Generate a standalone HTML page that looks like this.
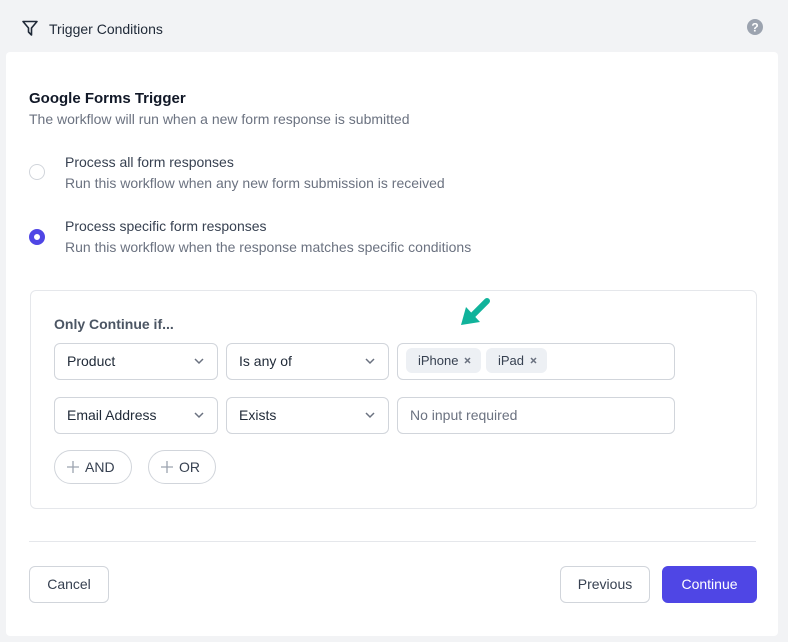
<!DOCTYPE html>
<html><head><style>
*{box-sizing:border-box;margin:0;padding:0}
body{width:788px;height:642px;background:#f2f3f5;font-family:"Liberation Sans",sans-serif;position:relative;overflow:hidden;color:#1f2937}
.a{position:absolute}
.panel{left:6px;top:52px;width:772px;height:584px;background:#fff;border-radius:4px}
.t{font-size:14px;white-space:nowrap}
.g{color:#6b7280}
.sel{position:absolute;height:37px;border:1px solid #d1d5db;border-radius:6px;background:#fff;font-size:14px;color:#1f2937;padding-left:12px;line-height:35px}
.sel svg{position:absolute;right:12px;top:13px}
.btn{position:absolute;border:1px solid #d1d5db;border-radius:6px;background:#fff;font-size:14px;color:#374151;text-align:center;line-height:35px;height:37px}
.pill{position:absolute;height:34px;border:1px solid #d1d5db;border-radius:17px;font-size:14px;color:#374151;line-height:32px;padding-left:30px}
.pill svg{position:absolute;left:12px;top:10px}
.chip{position:absolute;top:348px;height:25px;background:#edf0f4;border-radius:6px;font-size:13px;color:#374151;line-height:25px;padding-left:12px}
.chip svg{position:absolute;right:10px;top:9px}
</style></head><body>
<svg class="a" style="left:21px;top:19px" width="18" height="18" viewBox="0 0 18 18"><path d="M2 2.5h14l-5.5 6.5v7l-3-3v-4z" fill="none" stroke="#1f2937" stroke-width="1.6" stroke-linejoin="round"/></svg>
<div class="a t" style="left:49px;top:21px;color:#1f2937">Trigger Conditions</div>
<svg class="a" style="left:747px;top:19px" width="16" height="16" viewBox="0 0 16 16"><circle cx="8" cy="8" r="8" fill="#9ca3af"/><text x="8" y="12.5" font-size="12" font-weight="bold" text-anchor="middle" fill="#fff" font-family="Liberation Sans">?</text></svg>
<div class="a panel"></div>
<div class="a" style="left:29px;top:90px;font-size:15px;font-weight:bold;color:#111827">Google Forms Trigger</div>
<div class="a t g" style="left:29px;top:111px">The workflow will run when a new form response is submitted</div>
<div class="a" style="left:29px;top:164px;width:16px;height:16px;border:1px solid #d1d5db;border-radius:50%"></div>
<div class="a t" style="left:65px;top:154px;color:#374151">Process all form responses</div>
<div class="a t g" style="left:65px;top:175px">Run this workflow when any new form submission is received</div>
<div class="a" style="left:29px;top:229px;width:16px;height:16px;border:5px solid #4f46e5;border-radius:50%;background:#fff"></div>
<div class="a t" style="left:65px;top:218px;color:#374151">Process specific form responses</div>
<div class="a t g" style="left:65px;top:239px">Run this workflow when the response matches specific conditions</div>
<div class="a" style="left:30px;top:290px;width:727px;height:219px;border:1px solid #e5e7eb;border-radius:6px"></div>
<div class="a t" style="left:54px;top:316px;font-weight:bold;color:#4b5563">Only Continue if...</div>
<div class="sel" style="left:54px;top:343px;width:164px">Product<svg width="12" height="8" viewBox="0 0 12 8"><path d="M2 2l4 4 4-4" fill="none" stroke="#6b7280" stroke-width="1.5"/></svg></div>
<div class="sel" style="left:226px;top:343px;width:163px">Is any of<svg width="12" height="8" viewBox="0 0 12 8"><path d="M2 2l4 4 4-4" fill="none" stroke="#6b7280" stroke-width="1.5"/></svg></div>
<div class="sel" style="left:397px;top:343px;width:278px"></div>
<div class="chip" style="left:406px;width:75px">iPhone<svg width="7" height="7" viewBox="0 0 7 7"><path d="M1 1l5 5M6 1l-5 5" stroke="#6b7280" stroke-width="1.5"/></svg></div>
<div class="chip" style="left:486px;width:61px">iPad<svg width="7" height="7" viewBox="0 0 7 7"><path d="M1 1l5 5M6 1l-5 5" stroke="#6b7280" stroke-width="1.5"/></svg></div>
<div class="sel" style="left:54px;top:397px;width:164px">Email Address<svg width="12" height="8" viewBox="0 0 12 8"><path d="M2 2l4 4 4-4" fill="none" stroke="#6b7280" stroke-width="1.5"/></svg></div>
<div class="sel" style="left:226px;top:397px;width:163px">Exists<svg width="12" height="8" viewBox="0 0 12 8"><path d="M2 2l4 4 4-4" fill="none" stroke="#6b7280" stroke-width="1.5"/></svg></div>
<div class="sel" style="left:397px;top:397px;width:278px;color:#6b7280">No input required</div>
<div class="pill" style="left:54px;top:450px;width:78px"><svg width="12" height="12" viewBox="0 0 12 12"><path d="M6 0v12M0 6h12" stroke="#9ca3af" stroke-width="1.3"/></svg>AND</div>
<div class="pill" style="left:148px;top:450px;width:68px"><svg width="12" height="12" viewBox="0 0 12 12"><path d="M6 0v12M0 6h12" stroke="#9ca3af" stroke-width="1.3"/></svg>OR</div>
<svg class="a" style="left:458px;top:296px" width="34" height="32" viewBox="0 0 34 32"><path d="M29 5L14 20" stroke="#10b39b" stroke-width="6" stroke-linecap="round"/><path d="M3 29L8 11 22 26z" fill="#10b39b"/></svg>
<div class="a" style="left:29px;top:541px;width:727px;height:1px;background:#e5e7eb"></div>
<div class="btn" style="left:29px;top:566px;width:80px">Cancel</div>
<div class="btn" style="left:560px;top:566px;width:90px">Previous</div>
<div class="btn" style="left:662px;top:566px;width:95px;background:#4f46e5;border-color:#4f46e5;color:#fff">Continue</div>
</body></html>
